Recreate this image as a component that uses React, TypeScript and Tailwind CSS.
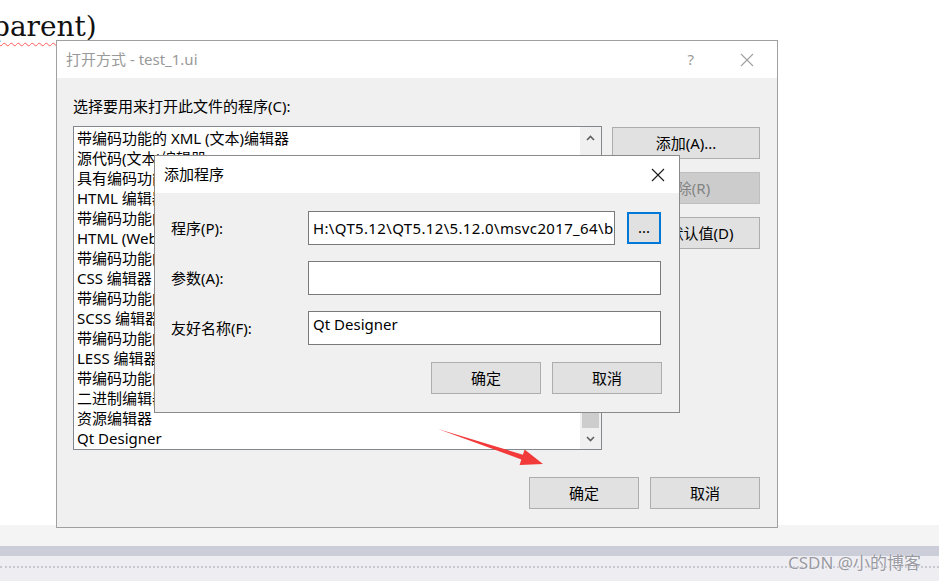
const ui = { fontFamily: '"Noto Sans", "Noto Sans CJK SC", sans-serif' };

const programs = [
  "带编码功能的 XML (文本)编辑器",
  "源代码(文本)编辑器",
  "具有编码功能的源代码(文本)编辑器",
  "HTML 编辑器",
  "带编码功能的 HTML 编辑器",
  "HTML (Web 窗体)编辑器",
  "带编码功能的 HTML (Web 窗体)编辑器",
  "CSS 编辑器",
  "带编码功能的 CSS 编辑器",
  "SCSS 编辑器",
  "带编码功能的 SCSS 编辑器",
  "LESS 编辑器",
  "带编码功能的 LESS 编辑器",
  "二进制编辑器",
  "资源编辑器",
  "Qt Designer",
];

const CloseIcon = ({ color }: { color: string }) => (
  <svg width="14" height="14" viewBox="0 0 14 14" fill="none" stroke={color} strokeWidth="1.1">
    <path d="M1 1 L13 13 M13 1 L1 13" />
  </svg>
);

const Chevron = ({ up }: { up?: boolean }) => (
  <svg width="9" height="6" viewBox="0 0 9 6" fill="none" stroke="#606060" strokeWidth="1.6">
    {up ? <path d="M1 5 L4.5 1.5 L8 5" /> : <path d="M1 1 L4.5 4.5 L8 1" />}
  </svg>
);

const Button = ({
  children,
  className = "",
  disabled,
}: {
  children: React.ReactNode;
  className?: string;
  disabled?: boolean;
}) => (
  <div
    className={`flex items-center justify-center text-[15px] border whitespace-nowrap ${
      disabled
        ? "bg-[#cccccc] border-[#bfbfbf] text-[#838383]"
        : "bg-[#e1e1e1] border-[#adadad] text-black"
    } ${className}`}
  >
    {children}
  </div>
);

const ListBox = () => (
  <div className="w-[529px] h-[324px] border border-[#828790] bg-white flex">
    <div className="flex-1 pl-[3px] pt-[1px] overflow-hidden">
      {programs.map((p) => (
        <div key={p} className="h-[20px] leading-[20px] text-[15px] whitespace-nowrap text-black">
          {p}
        </div>
      ))}
    </div>
    <div className="w-[21px] bg-[#f0f0f0] flex flex-col">
      <div className="h-[21px] flex items-center justify-center">
        <Chevron up />
      </div>
      <div className="flex-1 flex flex-col justify-end px-[2px]">
        <div className="h-[130px] bg-[#cdcdcd]" />
      </div>
      <div className="h-[21px] flex items-center justify-center">
        <Chevron />
      </div>
    </div>
  </div>
);

const OpenWithDialog = () => (
  <div className="absolute left-[56px] top-[40px] w-[722px] h-[488px] border border-[#a0a0a0] bg-[#f0f0f0] flex flex-col">
    <div className="h-[37px] bg-white flex items-center pl-[9px] pr-[23px] text-[15px] text-[#999999]">
      <span className="flex-1">打开方式 - test_1.ui</span>
      <span className="text-[15px]">?</span>
      <span className="ml-[46px] flex">
        <CloseIcon color="#a0a0a0" />
      </span>
    </div>
    <div className="flex-1 flex flex-col pt-[18px] pl-[16px] pr-[17px] pb-[18px]">
      <div className="h-[20px] leading-[20px] text-[15px] text-black">选择要用来打开此文件的程序(C):</div>
      <div className="mt-[10px] flex gap-[10px]">
        <ListBox />
        <div className="flex flex-col gap-[13px] pt-[1px]">
          <Button className="w-[148px] h-[32px]">添加(A)...</Button>
          <Button className="w-[148px] h-[32px]" disabled>
            移除(R)
          </Button>
          <Button className="w-[148px] h-[32px]">设为默认值(D)</Button>
        </div>
      </div>
      <div className="mt-auto flex justify-end gap-[11px]">
        <Button className="w-[110px] h-[32px]">确定</Button>
        <Button className="w-[110px] h-[32px]">取消</Button>
      </div>
    </div>
  </div>
);

const AddProgramDialog = () => (
  <div className="absolute left-[154px] top-[155px] w-[526px] h-[258px] border border-[#8a8a8a] bg-[#f0f0f0] flex flex-col">
    <div className="h-[37px] bg-white flex items-center pl-[9px] pr-[14px] text-[15px] text-black">
      <span className="flex-1">添加程序</span>
      <CloseIcon color="#1a1a1a" />
    </div>
    <div className="flex-1 flex flex-col pt-[18px] pl-[16px] pr-[18px] text-[15px] text-black">
      <div className="flex items-center h-[34px]">
        <span className="w-[137px]">程序(P):</span>
        <div className="w-[307px] h-[34px] border border-[#7a7a7a] bg-white flex items-center pl-[4px] whitespace-nowrap overflow-hidden tracking-[0.35px]">
          H:\QT5.12\QT5.12\5.12.0\msvc2017_64\b
        </div>
        <div className="ml-[12px] w-[34px] h-[32px] border-2 border-[#0078d7] bg-[#e1e1e1] flex items-center justify-center leading-none pb-[2px]">
          ...
        </div>
      </div>
      <div className="mt-[16px] flex items-center h-[34px]">
        <span className="w-[137px]">参数(A):</span>
        <div className="flex-1 h-[34px] border border-[#7a7a7a] bg-white" />
      </div>
      <div className="mt-[16px] flex items-center h-[34px]">
        <span className="w-[137px]">友好名称(F):</span>
        <div className="flex-1 h-[34px] border border-[#7a7a7a] bg-white pl-[4px] pt-[2px] leading-[20px]">
          Qt Designer
        </div>
      </div>
      <div className="mt-[17px] -mr-[1px] flex justify-end gap-[11px]">
        <Button className="w-[110px] h-[32px]">确定</Button>
        <Button className="w-[110px] h-[32px]">取消</Button>
      </div>
    </div>
  </div>
);

export default function App() {
  return (
    <div className="relative w-[939px] h-[581px] overflow-hidden bg-white flex flex-col" style={ui}>
      <div className="h-[525px] bg-white">
        <div
          className="mt-[9px] -ml-[8px] text-[28px] leading-[36px] text-[#111] whitespace-nowrap"
          style={{ fontFamily: '"DejaVu Serif", serif' }}
        >
          <span className="underline decoration-wavy decoration-[#ff5a5a] decoration-1 underline-offset-[6px]">
            pare
          </span>
          nt)
        </div>
      </div>
      <div className="h-[21px] bg-[#f4f4f4]" />
      <div className="h-[10px] bg-[#cbcdd9]" />
      <div className="h-[25px] bg-[#ededf2] pt-[10px]">
        <div className="border-t-2 border-dotted border-[#c9c9d2]" />
      </div>

      <OpenWithDialog />
      <AddProgramDialog />

      <svg className="absolute left-0 top-0 pointer-events-none" width="939" height="581">
        <polygon
          points="438,429 522.9,454.7 524.6,449.5 543,464 519.6,465 521.3,459.4"
          fill="#f23a3a"
        />
      </svg>

      <div
        className="absolute left-[788px] top-[551px] text-[17px] leading-[24px] text-[#9a9aa2] whitespace-nowrap"
        style={{ textShadow: "0 0 2px #ffffff" }}
      >
        CSDN @小的博客
      </div>
    </div>
  );
}
